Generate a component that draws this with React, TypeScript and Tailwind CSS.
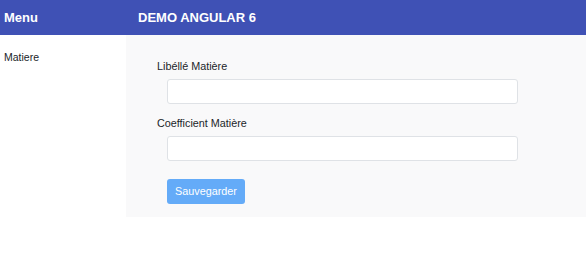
export default function App() {
  return (
    <div className="w-[586px] h-[271px] bg-white text-[#212529]" style={{ fontFamily: '"Liberation Sans", Arial, sans-serif' }}>
      <header className="h-[35px] bg-[#3f51b5] flex items-center text-white font-bold text-[13px]">
        <div className="w-[126px] pl-[4px]">Menu</div>
        <div className="pl-[12px]">DEMO ANGULAR 6</div>
      </header>
      <div className="flex">
        <aside className="w-[126px] pl-[4px] pt-[16px] text-[10.5px] leading-[12px]">Matiere</aside>
        <main className="flex-1 bg-[#f9f9fa] pl-[31px] pr-[68px] pt-[25px] pb-[13px]">
          <form className="flex flex-col" onSubmit={e => e.preventDefault()}>
            <label className="text-[10.8px] leading-[12px] mb-[7px]">Libéllé Matière</label>
            <input className="ml-[10px] h-[25px] bg-white border border-[#dfe2e6] rounded-[3px] outline-none" />
            <label className="text-[10.8px] leading-[12px] mt-[13px] mb-[7px]">Coefficient Matière</label>
            <input className="ml-[10px] h-[25px] bg-white border border-[#dfe2e6] rounded-[3px] outline-none" />
            <div className="ml-[10px] mt-[17px]">
              <button
                type="submit"
                disabled
                className="h-[25px] w-[78px] rounded-[3px] bg-[#64abf8] text-white text-[10.8px]"
              >Sauvegarder</button>
            </div>
          </form>
        </main>
      </div>
    </div>
  );
}
